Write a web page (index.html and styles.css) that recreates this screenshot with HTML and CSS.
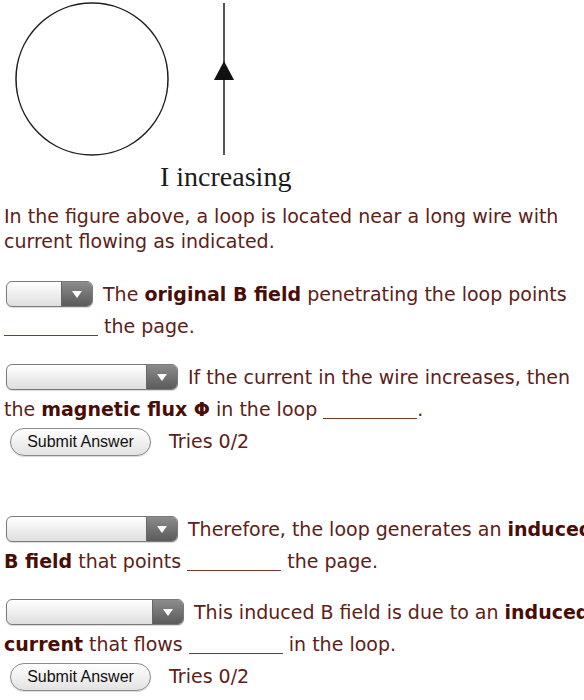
FILE: index.html
```html
<!DOCTYPE html>
<html lang="en">
<head>
  <meta charset="UTF-8">
  <title>Induction Loop</title>
  <link rel="stylesheet" href="styles.css">
</head>
<body>
  <div class="figure">
    <svg width="300" height="204" viewBox="0 0 300 204">
      <circle cx="92" cy="79" r="76" fill="none" stroke="#1e1e1e" stroke-width="1.5"/>
      <line x1="224" y1="3" x2="224" y2="155" stroke="#1e1e1e" stroke-width="1.5"/>
      <polygon points="224,61 214,80 234,80" fill="#111"/>
      <text x="160" y="186" class="fig-label">I increasing</text>
    </svg>
  </div>

  <p class="intro">In the figure above, a loop is located near a long wire with<br>current flowing as indicated.</p>

  <div class="question">
    <div class="row"><span class="select w87"><span class="arrow"></span></span>The <b>original B field</b> penetrating the loop points</div>
    <div class="row"><span class="blank"></span> the page.</div>
  </div>

  <div class="question">
    <div class="row"><span class="select w172"><span class="arrow"></span></span>If the current in the wire increases, then</div>
    <div class="row">the <b>magnetic flux &Phi;</b> in the loop <span class="blank"></span>.</div>
    <div class="row submit-row">
      <button class="submit">Submit Answer</button>
      <span class="tries">Tries 0/2</span>
    </div>
  </div>

  <div class="question gap">
    <div class="row"><span class="select w172"><span class="arrow"></span></span>Therefore, the loop generates an <b>induced</b></div>
    <div class="row"><b>B field</b> that points <span class="blank"></span> the page.</div>
  </div>

  <div class="question">
    <div class="row"><span class="select w178"><span class="arrow"></span></span>This induced B field is due to an <b>induced</b></div>
    <div class="row"><b>current</b> that flows <span class="blank"></span> in the loop.</div>
    <div class="row submit-row">
      <button class="submit">Submit Answer</button>
      <span class="tries">Tries 0/2</span>
    </div>
  </div>
</body>
</html>
```

FILE: styles.css
```css
body {
  margin: 0;
  padding: 0;
  background-color: #fff;
  font-family: "DejaVu Sans", Verdana, sans-serif;
  font-size: 19px;
  color: #5e2116;
  overflow: hidden;
  white-space: nowrap;
}
b {
  color: #4a0d06;
}
.figure svg {
  display: block;
}
.fig-label {
  font-family: "Liberation Serif", "Times New Roman", serif;
  font-size: 28px;
  fill: #1a1a1a;
}
.intro {
  margin: 0;
  padding-left: 4px;
  line-height: 25px;
}
.question {
  margin-top: 19px;
  padding-left: 4px;
}
.intro + .question {
  margin-top: 24px;
}
.question.gap {
  margin-top: 56px;
}
.row {
  height: 32px;
  line-height: 32px;
}
.select {
  position: relative;
  display: inline-block;
  vertical-align: middle;
  height: 24px;
  margin-left: 2px;
  margin-right: 10px;
  margin-top: -3px;
  border: 1px solid #7a7a7a;
  border-radius: 6px;
  background: linear-gradient(#ffffff, #dedede);
  box-shadow: 0 1px 1px rgba(0, 0, 0, 0.15);
  overflow: hidden;
}
.w87 { width: 85px; }
.w172 { width: 170px; }
.w178 { width: 176px; }
.arrow {
  position: absolute;
  top: 0;
  right: 0;
  bottom: 0;
  width: 30px;
  border-left: 1px solid #666;
  background: linear-gradient(#8c8c8c, #5a5a5a);
}
.arrow::after {
  content: "";
  position: absolute;
  left: 10px;
  top: 9px;
  border-left: 5px solid transparent;
  border-right: 5px solid transparent;
  border-top: 7px solid #fff;
}
.blank {
  display: inline-block;
  width: 94px;
  border-bottom: 1px solid #7a3a2e;
  margin-bottom: -3px;
}
.submit-row {
  padding-left: 6px;
}
.submit {
  vertical-align: middle;
  height: 28px;
  width: 141px;
  padding: 0;
  margin-top: -2px;
  font-family: "Liberation Sans", Arial, sans-serif;
  font-size: 16px;
  color: #111;
  border: 1px solid #8a8a8a;
  border-radius: 14px;
  background: linear-gradient(#ffffff, #e2e2e2);
  box-shadow: 0 1px 1px rgba(0, 0, 0, 0.15);
}
.tries {
  margin-left: 12px;
}
```
